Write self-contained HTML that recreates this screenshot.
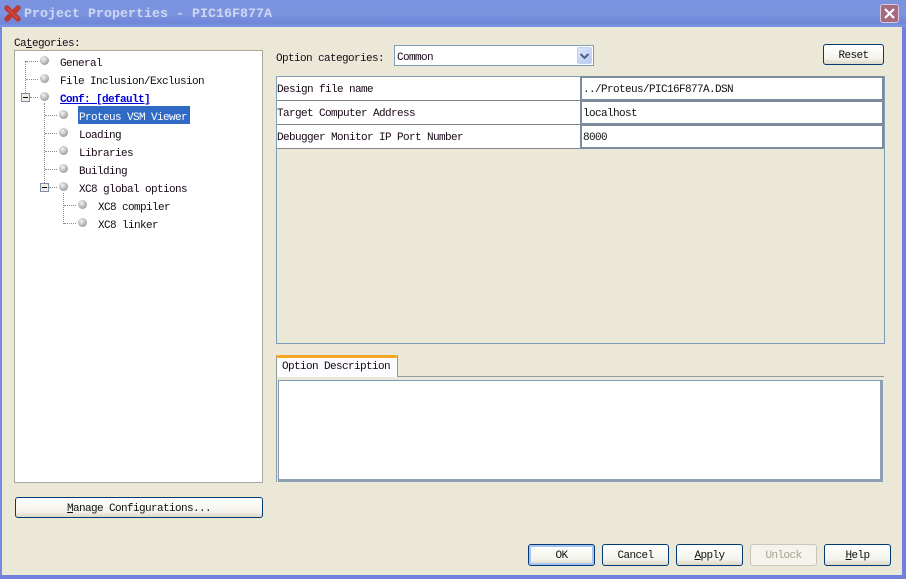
<!DOCTYPE html>
<html><head><meta charset="utf-8"><style>
html,body{margin:0;padding:0}
body{width:906px;height:579px;overflow:hidden;position:relative;background:#ebe8d8;font:11px/14px "Liberation Mono",monospace;letter-spacing:-.6px;color:#111}
div,span.a,svg{position:absolute}
.t{white-space:pre;color:#180818}
.btn{box-sizing:border-box;height:22px;border:1px solid #003c74;border-radius:3px;background:linear-gradient(#fff,#f4f3ec 70%,#dcd8c9);text-align:center;line-height:22px;white-space:pre;color:#111}
u{text-decoration:underline}
.b{width:9px;height:9px;border-radius:50%;background:radial-gradient(circle at 40% 35%,#f4f4f4,#b4b4b4 55%,#777)}
.dh{height:0;border-top:1px dotted #8a8a8a}
.dv{width:0;border-left:1px dotted #8a8a8a}
.cell{box-sizing:border-box;background:#fff}
.val{box-sizing:border-box;background:#fff;border:2px solid #7c8c9c;line-height:24px;padding-left:1px;white-space:pre}
</style></head><body>
<div style="left:0;top:0;width:906px;height:27px;background:linear-gradient(#7e96dc 0,#7a92e0 8%,#7d95e0 50%,#6f85d8 85%,#7d9ae6 100%)"></div>
<div style="left:0;top:27px;width:2px;height:552px;background:#7888e0"></div>
<div style="left:902px;top:27px;width:4px;height:552px;background:#7080dc"></div>
<div style="left:0;top:575px;width:906px;height:4px;background:#7080dc"></div>

<svg style="left:4px;top:5px" width="17" height="17" viewBox="0 0 17 17"><path d="M3 3L14 14M14 3L3 14" stroke="#bb3a34" stroke-width="5.4" stroke-linecap="round"/><path d="M3.5 3.5L13.5 13.5" stroke="#d94a3c" stroke-width="1.5"/></svg>
<div class="t" style="left:24px;top:7px;font-size:13.33px;line-height:16px;letter-spacing:0;color:#dde3f5;font-weight:bold;opacity:.85">Project Properties - PIC16F877A</div>
<div style="left:880px;top:4px;box-sizing:border-box;width:19px;height:19px;background:#a56a80;border:1px solid #d8c8d8;border-radius:3px"></div>
<svg style="left:880px;top:4px" width="19" height="19" viewBox="0 0 19 19"><path d="M5 5L14 14M14 5L5 14" stroke="#fff" stroke-width="2.2"/></svg>

<div class="t" style="left:14px;top:37px">Ca<u>t</u>egories:</div>
<div style="left:14px;top:50px;box-sizing:border-box;width:249px;height:433px;background:#fff;border:1px solid #a8a79a"></div>

<div class="dv" style="left:25px;top:61px;height:32px"></div>
<div class="dh" style="left:26px;top:61px;width:12px"></div>
<div class="dh" style="left:26px;top:79px;width:12px"></div>
<div class="dh" style="left:30px;top:97px;width:8px"></div>
<div class="dv" style="left:44px;top:103px;height:80px"></div>
<div class="dh" style="left:45px;top:115px;width:12px"></div>
<div class="dh" style="left:45px;top:133px;width:12px"></div>
<div class="dh" style="left:45px;top:151px;width:12px"></div>
<div class="dh" style="left:45px;top:169px;width:12px"></div>
<div class="dh" style="left:49px;top:187px;width:8px"></div>
<div class="dv" style="left:63px;top:193px;height:31px"></div>
<div class="dh" style="left:64px;top:205px;width:12px"></div>
<div class="dh" style="left:64px;top:223px;width:12px"></div>

<div style="left:21px;top:93px;box-sizing:border-box;width:9px;height:9px;border:1px solid #7c8ea8;background:#eeeee4"></div>
<div style="left:23px;top:97px;width:5px;height:1px;background:#000"></div>
<div style="left:40px;top:183px;box-sizing:border-box;width:9px;height:9px;border:1px solid #7c8ea8;background:#eeeee4"></div>
<div style="left:42px;top:187px;width:5px;height:1px;background:#000"></div>

<div class="b" style="left:40px;top:56px"></div>
<div class="b" style="left:40px;top:74px"></div>
<div class="b" style="left:40px;top:92px"></div>
<div class="b" style="left:59px;top:110px"></div>
<div class="b" style="left:59px;top:128px"></div>
<div class="b" style="left:59px;top:146px"></div>
<div class="b" style="left:59px;top:164px"></div>
<div class="b" style="left:59px;top:182px"></div>
<div class="b" style="left:78px;top:200px"></div>
<div class="b" style="left:78px;top:218px"></div>

<div class="t" style="left:60px;top:57px">General</div>
<div class="t" style="left:60px;top:75px">File Inclusion/Exclusion</div>
<div class="t" style="left:60px;top:93px;color:#0000e0;font-weight:bold;text-decoration:underline">Conf: [default]</div>
<div style="left:78px;top:106px;width:112px;height:18px;background:#316ac5"></div>
<div class="t" style="left:79px;top:111px;color:#fff">Proteus VSM Viewer</div>
<div class="t" style="left:79px;top:129px">Loading</div>
<div class="t" style="left:79px;top:147px">Libraries</div>
<div class="t" style="left:79px;top:165px">Building</div>
<div class="t" style="left:79px;top:183px">XC8 global options</div>
<div class="t" style="left:98px;top:201px">XC8 compiler</div>
<div class="t" style="left:98px;top:219px">XC8 linker</div>

<div class="t" style="left:276px;top:52px">Option categories:</div>
<div style="left:394px;top:45px;box-sizing:border-box;width:200px;height:21px;background:#fff;border:1px solid #7f9db9"></div>
<div class="t" style="left:397px;top:51px">Common</div>
<div style="left:577px;top:47px;box-sizing:border-box;width:15px;height:17px;background:linear-gradient(135deg,#dce6fb,#b8c9f2);border:1px solid #c4d2ef;border-radius:2px"></div>
<svg style="left:577px;top:47px" width="15" height="17" viewBox="0 0 15 17"><path d="M3.5 7L7.5 11L11.5 7" fill="none" stroke="#4d6185" stroke-width="2"/></svg>

<div class="btn" style="left:823px;top:44px;width:61px;height:21px;line-height:22px">Reset</div>

<div style="left:276px;top:76px;box-sizing:border-box;width:609px;height:268px;border:1px solid #7f9db9"></div>
<div class="cell" style="left:277px;top:77px;width:303px;height:23px"></div>
<div class="cell" style="left:277px;top:101px;width:303px;height:23px"></div>
<div class="cell" style="left:277px;top:125px;width:303px;height:23px"></div>
<div style="left:277px;top:100px;width:303px;height:1px;background:#868686"></div>
<div style="left:277px;top:124px;width:303px;height:1px;background:#868686"></div>
<div style="left:277px;top:148px;width:303px;height:1px;background:#868686"></div>
<div class="t" style="left:277px;top:83px">Design file name</div>
<div class="t" style="left:277px;top:107px">Target Computer Address</div>
<div class="t" style="left:277px;top:131px">Debugger Monitor IP Port Number</div>
<div class="val" style="left:580px;top:76px;width:304px;height:25px">../Proteus/PIC16F877A.DSN</div>
<div class="val" style="left:580px;top:100px;width:304px;height:25px">localhost</div>
<div class="val" style="left:580px;top:124px;width:304px;height:25px">8000</div>

<div style="left:276px;top:376px;width:608px;height:1px;background:#919b9c"></div>
<div style="left:276px;top:376px;width:1px;height:106px;background:#919b9c"></div>
<div style="left:278px;top:380px;box-sizing:border-box;width:605px;height:102px;background:#fff;border:1px solid #7f9db9;border-right:3px solid #8ba0b2;border-bottom:3px solid #8ba0b2"></div>
<div style="left:276px;top:355px;box-sizing:border-box;width:122px;height:22px;background:#fcfcfe;border:1px solid #919b9c;border-top:none;border-bottom:none"></div>
<div style="left:276px;top:355px;width:122px;height:3px;background:#f5a623;border-radius:3px 3px 0 0"></div>
<div class="t" style="left:282px;top:360px">Option Description</div>

<div class="btn" style="left:15px;top:497px;width:248px;height:21px;line-height:23px"><u>M</u>anage Configurations...</div>
<div class="btn" style="left:528px;top:544px;width:67px;box-shadow:inset 0 0 0 2px #a9c3f2">OK</div>
<div class="btn" style="left:602px;top:544px;width:67px">Cancel</div>
<div class="btn" style="left:676px;top:544px;width:67px"><u>A</u>pply</div>
<div class="btn" style="left:750px;top:544px;width:67px;border-color:#c9c7ba;background:#f4f3ec;color:#a5a294">Unlock</div>
<div class="btn" style="left:824px;top:544px;width:67px"><u>H</u>elp</div>
</body></html>
